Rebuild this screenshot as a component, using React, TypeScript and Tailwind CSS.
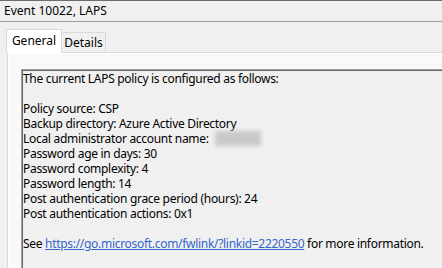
import React from 'react';

const lines = [
  'Policy source: CSP',
  'Backup directory: Azure Active Directory',
];

const lines2 = [
  'Password age in days: 30',
  'Password complexity: 4',
  'Password length: 14',
  'Post authentication grace period (hours): 24',
  'Post authentication actions: 0x1',
];

export default function App() {
  return (
    <div
      className="w-[442px] h-[268px] overflow-hidden bg-[#f0f0f0] border-t border-[#6d6d6d] text-[12px] text-black"
      style={{ fontFamily: '"Noto Sans", sans-serif' }}
    >
      {/* Title */}
      <div className="h-[21px] pl-[4px] leading-[20px] border-b border-[#a0a0a0]">Event 10022, LAPS</div>

      {/* Tabs */}
      <div className="flex items-end pl-[6px] pt-[7px] leading-none">
        <div className="relative z-10 -mb-px w-[56px] h-[24px] bg-white border border-b-0 border-[#d9d9d9] flex items-center justify-center pb-[1px]">
          General
        </div>
        <div className="w-[44px] h-[20px] bg-[#f0f0f0] border border-l-0 border-b-0 border-[#d9d9d9] flex items-center justify-center pt-[1px]">
          Details
        </div>
      </div>

      {/* Tab page */}
      <div className="ml-[7px] w-[460px] h-[300px] border-t border-l border-[#d9d9d9]">
        <div className="h-full border-t border-l border-white bg-[#f9f9f9] pl-[12px] pt-[15px]">
          <div className="h-full border-t border-l border-[#a0a0a0]">
            <div className="h-full border-t border-l border-[#696969] bg-[#f0f0f0] leading-[15px] tracking-[-0.3px] whitespace-nowrap">
              <div>The current LAPS policy is configured as follows:</div>
              <div className="h-[15px]" />
              {lines.map((l) => (
                <div key={l}>{l}</div>
              ))}
              <div className="flex items-center">
                <span>Local administrator account name:</span>
                <span className="ml-[6px] inline-block w-[46px] h-[15px] bg-[#c9c9c9] blur-[2px]" />
              </div>
              {lines2.map((l) => (
                <div key={l}>{l}</div>
              ))}
              <div className="h-[15px]" />
              <div>
                See{' '}
                <a className="text-[#3366cc] underline" href="#">
                  https://go.microsoft.com/fwlink/?linkid=2220550
                </a>{' '}
                for more information.
              </div>
            </div>
          </div>
        </div>
      </div>
    </div>
  );
}
